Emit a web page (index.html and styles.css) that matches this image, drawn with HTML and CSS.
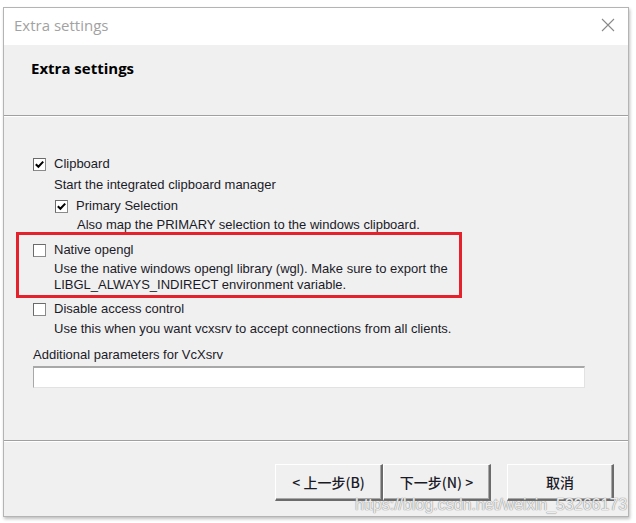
FILE: index.html
```html
<!DOCTYPE html>
<html>
<head>
<meta charset="utf-8">
<link rel="stylesheet" href="styles.css">
</head>
<body>
<div class="window">
  <div class="titlebar">
    <span class="title">Extra settings</span>
    <svg class="close" width="14" height="14" viewBox="0 0 14 14"><path d="M1 1L13 13M13 1L1 13" stroke="#8a8a8a" stroke-width="1.1" fill="none"/></svg>
  </div>
  <div class="header">
    <div class="heading">Extra settings</div>
  </div>
  <div class="content">
    <div class="opt"><span class="cb checked"><svg width="9" height="9" viewBox="0 0 9 9"><path d="M0.8 4.2L3.4 6.8L8.2 1.6" stroke="#000" stroke-width="2" fill="none"/></svg></span><span>Clipboard</span></div>
    <div class="desc d1">Start the integrated clipboard manager</div>
    <div class="opt sub"><span class="cb checked"><svg width="9" height="9" viewBox="0 0 9 9"><path d="M0.8 4.2L3.4 6.8L8.2 1.6" stroke="#000" stroke-width="2" fill="none"/></svg></span><span>Primary Selection</span></div>
    <div class="desc subdesc">Also map the PRIMARY selection to the windows clipboard.</div>
    <div class="opt o3"><span class="cb"></span><span>Native opengl</span></div>
    <div class="desc d3">Use the native windows opengl library (wgl). Make sure to export the<br>LIBGL_ALWAYS_INDIRECT environment variable.</div>
    <div class="opt o4"><span class="cb"></span><span>Disable access control</span></div>
    <div class="desc d4">Use this when you want vcxsrv to accept connections from all clients.</div>
    <div class="label">Additional parameters for VcXsrv</div>
    <div class="input"></div>
  </div>
  <div class="footer">
    <div class="btn">&lt; 上一步(B)</div>
    <div class="btn">下一步(N) &gt;</div>
    <div class="btn cancel">取消</div>
  </div>
</div>
<div class="highlight"></div>
<div class="watermark">https://blog.csdn.net/weixin_53266173</div>
</body>
</html>
```
FILE: styles.css
```css
html, body {
  margin: 0;
  padding: 0;
  background: #ffffff;
  width: 636px;
  height: 523px;
  overflow: hidden;
  position: relative;
  font-family: "Liberation Sans", Arial, "Noto Sans CJK SC", sans-serif;
}
.window {
  margin: 7px 0 0 3px;
  width: 624px;
  height: 508px;
  border: 1px solid #b4b4b4;
  background: #f0f0f0;
  box-shadow: 1px 2px 3px rgba(0,0,0,0.25);
  display: flex;
  flex-direction: column;
}
.titlebar {
  height: 37px;
  box-sizing: border-box;
  background: #ffffff;
  display: flex;
  align-items: center;
  justify-content: space-between;
  padding: 0 13px 3px 10px;
}
.title {
  font-family: "Open Sans", "Noto Sans", sans-serif;
  font-size: 15px;
  color: #a2a2a2;
}
.header {
  height: 71px;
  border-bottom: 1px solid #a0a0a0;
  box-shadow: 0 1px 0 #ffffff;
  padding: 13px 0 0 27px;
  box-sizing: border-box;
}
.heading {
  font-family: "Open Sans", "Noto Sans", sans-serif;
  font-weight: bold;
  font-size: 15px;
  color: #000;
}
.content {
  flex: 1;
  padding: 40px 0 0 29px;
  font-size: 13px;
  line-height: 16px;
  color: #1b1b28;
}
.opt {
  display: flex;
  align-items: center;
  height: 16px;
  gap: 8px;
}
.cb {
  width: 13px;
  height: 13px;
  box-sizing: border-box;
  border: 1px solid #8a8a8a;
  border-top-color: #6a6a6a;
  border-left-color: #6a6a6a;
  background: #ffffff;
  display: flex;
  align-items: center;
  justify-content: center;
}
.desc { margin-left: 21px; }
.d1 { margin-top: 5px; }
.sub { margin: 5px 0 0 22px; }
.subdesc { margin: 3px 0 0 44px; }
.o3 { margin-top: 9px; }
.d3 { margin-top: 3px; }
.o4 { margin-top: 8px; }
.d4 { margin-top: 4px; }
.label { margin-top: 10px; }
.input {
  margin-top: 3px;
  width: 552px;
  height: 22px;
  box-sizing: border-box;
  background: #fff;
  border: 1px solid #e2e2e2;
  border-top: 2px solid #a8a8a8;
  border-left: 1px solid #a8a8a8;
}
.footer {
  height: 76px;
  border-top: 1px solid #a0a0a0;
  box-shadow: inset 0 1px 0 #ffffff;
  display: flex;
  justify-content: flex-end;
  align-items: flex-start;
  padding: 23px 14px 0 0;
  box-sizing: border-box;
}
.btn {
  width: 108px;
  height: 37px;
  box-sizing: border-box;
  background: #f0f0f0;
  border-top: 1px solid #ffffff;
  border-left: 1px solid #ffffff;
  border-right: 2px solid #6b6b6b;
  border-bottom: 2px solid #6b6b6b;
  box-shadow: inset -1px -1px 0 #a8a8a8;
  display: flex;
  align-items: center;
  justify-content: center;
  font-family: "Noto Sans CJK SC", sans-serif;
  font-weight: 500;
  font-size: 14px;
  color: #1b1b28;
}
.cancel { margin-left: 16px; width: 107px; }
.highlight {
  position: absolute;
  left: 16px;
  top: 232px;
  width: 440px;
  height: 60px;
  border: 3px solid #e5222b;
}
.watermark {
  position: absolute;
  left: 355px;
  top: 496px;
  font-family: "Liberation Sans", Arial, sans-serif;
  font-size: 16px;
  color: rgba(255,255,255,0.85);
  text-shadow: 0 0 1px #8a8a8a, 0 0 1px #8a8a8a;
}
```
